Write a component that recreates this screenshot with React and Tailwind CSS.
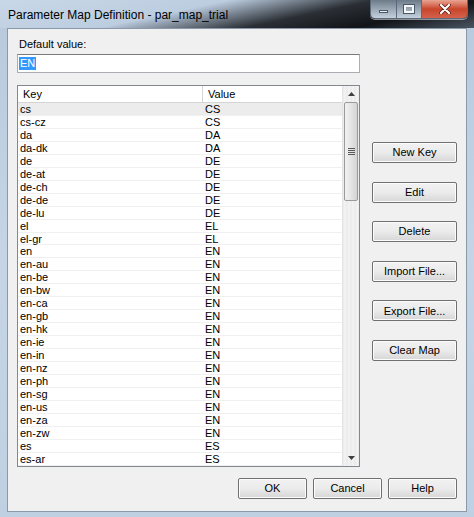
import React from "react";

const rows = [
  ["cs", "CS"], ["cs-cz", "CS"], ["da", "DA"], ["da-dk", "DA"], ["de", "DE"],
  ["de-at", "DE"], ["de-ch", "DE"], ["de-de", "DE"], ["de-lu", "DE"], ["el", "EL"],
  ["el-gr", "EL"], ["en", "EN"], ["en-au", "EN"], ["en-be", "EN"], ["en-bw", "EN"],
  ["en-ca", "EN"], ["en-gb", "EN"], ["en-hk", "EN"], ["en-ie", "EN"], ["en-in", "EN"],
  ["en-nz", "EN"], ["en-ph", "EN"], ["en-sg", "EN"], ["en-us", "EN"], ["en-za", "EN"],
  ["en-zw", "EN"], ["es", "ES"], ["es-ar", "ES"], ["es-bo", "ES"],
];

const sideButtons = ["New Key", "Edit", "Delete", "Import File...", "Export File...", "Clear Map"];

function Button({ children, className = "" }) {
  return (
    <div
      className={
        "flex items-center justify-center h-[21px] border border-[#707070] rounded-[2px] bg-gradient-to-b from-[#f2f2f2] via-[#ebebeb] to-[#d6d6d6] text-[11px] text-black shadow-[inset_0_0_0_1px_#fcfcfc] " +
        className
      }
    >
      {children}
    </div>
  );
}

function CaptionButtons() {
  return (
    <div className="flex h-[19px] mt-0 mr-[6px] rounded-b-[5px] border border-t-0 border-[#5a6a7c] overflow-hidden shadow-[0_1px_0_rgba(255,255,255,0.5)]">
      <div className="w-[26px] flex items-end justify-center pb-[5px] bg-gradient-to-b from-[#6d7a88] via-[#9aa7b4] to-[#c5d0dc] border-r border-[#5a6a7c]">
        <div className="w-[9px] h-[3px] bg-[#e8eef4] border border-[#4a5868]" />
      </div>
      <div className="w-[25px] flex items-center justify-center bg-gradient-to-b from-[#6d7a88] via-[#9aa7b4] to-[#c5d0dc] border-r border-[#5a6a7c]">
        <div className="w-[10px] h-[8px] border-2 border-[#f4f7fa] outline outline-1 outline-[#4a5868]" />
      </div>
      <div className="w-[45px] flex items-center justify-center bg-gradient-to-b from-[#e8a493] via-[#c7452b] to-[#d5614a]">
        <svg width="12" height="10" viewBox="0 0 12 10">
          <path d="M2 1 L10 9 M10 1 L2 9" stroke="#5a1a10" strokeWidth="3.6" strokeLinecap="round" />
          <path d="M2 1 L10 9 M10 1 L2 9" stroke="#ffffff" strokeWidth="2.2" strokeLinecap="round" />
        </svg>
      </div>
    </div>
  );
}

function ScrollBar() {
  return (
    <div className="w-[17px] flex flex-col bg-[#f0f0f0] border-l border-[#e4e4e4] bg-[repeating-linear-gradient(90deg,#eaeaea_0px,#f4f4f4_2px,#eaeaea_4px)]">
      <div className="h-[16px] flex items-center justify-center">
        <svg width="7" height="4" viewBox="0 0 7 4"><path d="M3.5 0 L7 4 L0 4 Z" fill="#404040" /></svg>
      </div>
      <div className="mx-[1px] h-[99px] rounded-[2px] border border-[#9a9a9a] bg-gradient-to-r from-[#f2f2f2] via-[#e4e4e4] to-[#d3d3d3] flex items-center justify-center">
        <div className="flex flex-col gap-[1px]">
          <div className="w-[7px] h-[1px] bg-[#5a5a5a]" />
          <div className="w-[7px] h-[1px] bg-[#5a5a5a]" />
          <div className="w-[7px] h-[1px] bg-[#5a5a5a]" />
          <div className="w-[7px] h-[1px] bg-[#5a5a5a]" />
        </div>
      </div>
      <div className="flex-1" />
      <div className="h-[16px] flex items-center justify-center">
        <svg width="7" height="4" viewBox="0 0 7 4"><path d="M0 0 L7 0 L3.5 4 Z" fill="#404040" /></svg>
      </div>
    </div>
  );
}

export default function App() {
  return (
    <div
      className="w-[474px] h-[517px] flex flex-col overflow-hidden bg-gradient-to-b from-[#b7c9dc] via-[#c5d5e6] to-[#bfd0e2]"
      style={{ fontFamily: '"Liberation Sans", Arial, sans-serif' }}
    >
      {/* title bar with glass streak */}
      <div className="h-[28px] flex items-start bg-[linear-gradient(168deg,#c9d8e7_0%,#bccde0_38%,#2b2f35_62%,#121418_80%,#4a5562_100%)]">
        <div className="flex-1 flex items-center h-[28px] pl-[8px] pt-[1px]">
          <span className="text-[12px] text-black">Parameter Map Definition - par_map_trial</span>
        </div>
        <CaptionButtons />
      </div>

      {/* client area */}
      <div className="flex-1 mx-[7px] border border-[#8a99aa] bg-[#f0f0f0] flex flex-col pl-[9px] pr-[9px] pt-[9px] pb-[12px] text-[11px] text-black">
        <div className="flex">
          <div className="w-[343px] flex flex-col">
            <div className="h-[13px] leading-[13px] pl-[2px]">Default value:</div>
            <div className="mt-[3px] h-[19px] border border-[#abadb3] border-t-[#7a7a7a] bg-white flex items-center pl-[1px]">
              <span className="bg-[#3399ff] text-white leading-[13px] px-[1px]">EN</span>
            </div>
            <div className="mt-[12px] h-[382px] border border-[#828790] bg-white flex overflow-hidden">
              <div className="flex-1 flex flex-col overflow-hidden">
                <div className="h-[17px] flex shrink-0 border-b border-[#d5d5d5] bg-white">
                  <div className="w-[185px] border-r border-[#d5d5d5] pl-[5px] leading-[16px]">Key</div>
                  <div className="flex-1 pl-[5px] leading-[16px]">Value</div>
                </div>
                <div className="flex flex-col">
                  {rows.map(([k, v], i) => (
                    <div
                      key={k}
                      className={
                        "h-[12.96px] shrink-0 flex border-b border-[#f0f0f0] leading-[12px] " +
                        (i === 0 ? "bg-[#ececec]" : "")
                      }
                    >
                      <div className="w-[185px] pl-[2px]">{k}</div>
                      <div className="flex-1 pl-[2px]">{v}</div>
                    </div>
                  ))}
                </div>
              </div>
              <ScrollBar />
            </div>
          </div>
          <div className="ml-[12px] w-[85px] flex flex-col gap-[18.6px] pt-[104px]">
            {sideButtons.map((b) => (
              <Button key={b}>{b}</Button>
            ))}
          </div>
        </div>
        <div className="mt-[11px] flex justify-end gap-[6px]">
          <Button className="w-[69px] border-[#3c3c3c] shadow-[inset_0_0_0_1px_#fcfcfc,0_0_0_1px_#707070]">OK</Button>
          <Button className="w-[69px]">Cancel</Button>
          <Button className="w-[69px]">Help</Button>
        </div>
      </div>
      <div className="h-[6px]" />
    </div>
  );
}
